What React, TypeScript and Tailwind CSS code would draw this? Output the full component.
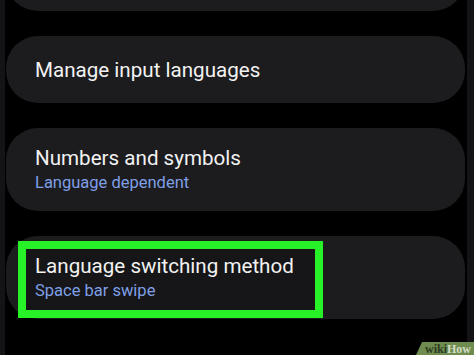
export default function App() {
  const font = { fontFamily: "Roboto, 'Noto Sans', sans-serif" };
  return (
    <div className="relative flex h-[355px] w-[474px] overflow-hidden bg-black" style={font}>
      <div className="w-[5px] shrink-0 bg-[#141416]" />
      <div className="flex flex-1 flex-col gap-[25px] pl-[1px] pr-[2px]">
        <div className="-mt-[60px] h-[71px] shrink-0 rounded-[32px] bg-[#1c1c1e]" />

        <div className="flex h-[67px] shrink-0 items-center rounded-[32px] bg-[#1c1c1e] px-[29px]">
          <span className="text-[20.6px] leading-6 text-[#f2f2f2]">Manage input languages</span>
        </div>

        <div className="flex h-[83px] shrink-0 flex-col justify-center gap-[3px] rounded-[32px] bg-[#1c1c1e] px-[29px]">
          <span className="text-[20.6px] leading-6 text-[#f2f2f2]">Numbers and symbols</span>
          <span className="text-[16.5px] leading-5 text-[#7f9fe6]">Language dependent</span>
        </div>

        <div className="relative flex h-[83px] shrink-0 flex-col justify-center gap-[3px] rounded-[32px] bg-[#1c1c1e] px-[29px]">
          <div className="absolute left-[12px] top-[5px] h-[77px] w-[305px] border-[8px] border-[#27f227] bg-[#161618]" />
          <span className="relative text-[20.6px] leading-6 text-[#f2f2f2]">Language switching method</span>
          <span className="relative text-[16.5px] leading-5 text-[#7f9fe6]">Space bar swipe</span>
        </div>
      </div>
      <div className="w-[7px] shrink-0 bg-[#141416]" />

      <div className="absolute bottom-0 right-0 flex h-[13px] w-[58px] items-center justify-end bg-[#6e8c4f] pr-[3px] [clip-path:polygon(6px_0,100%_0,100%_100%,0_100%)]">
        <span className="text-[12px] font-bold leading-none" style={{ fontFamily: "'Liberation Serif', serif" }}>
          <span className="text-[#2b3a1e]">wiki</span>
          <span className="text-[#d3dcc4]">How</span>
        </span>
      </div>
    </div>
  );
}
